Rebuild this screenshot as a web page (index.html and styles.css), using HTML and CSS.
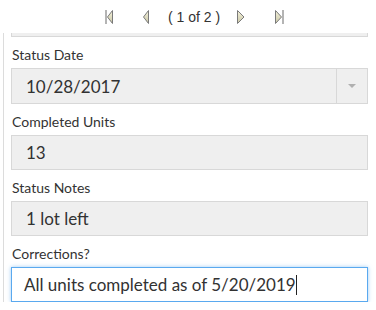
FILE: index.html
```html
<!DOCTYPE html>
<html lang="en">
<head>
    <meta charset="UTF-8">
    <meta name="viewport" content="width=device-width, initial-scale=1.0">
    <title>Edit Status</title>
    <link rel="stylesheet" href="styles.css">
</head>
<body>
    <div class="pager">
        <button class="pager-btn first" title="First">
            <svg width="8" height="16" viewBox="0 0 8 16">
                <defs>
                    <linearGradient id="gl" x1="0" y1="0" x2="0" y2="1">
                        <stop offset="0" stop-color="#f4f2dc"/>
                        <stop offset="1" stop-color="#c9c6a6"/>
                    </linearGradient>
                </defs>
                <rect x="0.5" y="1" width="1" height="14" fill="#6b6b6b"/>
                <path d="M7.5 1.5 L2.5 8 L7.5 14.5 Z" fill="url(#gl)" stroke="#7a7a7a" stroke-width="1" stroke-linejoin="round"/>
            </svg>
        </button>
        <button class="pager-btn prev" title="Previous">
            <svg width="6" height="16" viewBox="0 0 6 16">
                <path d="M5.5 1.5 L0.5 8 L5.5 14.5 Z" fill="url(#gl)" stroke="#7a7a7a" stroke-width="1" stroke-linejoin="round"/>
            </svg>
        </button>
        <span class="pager-count">( 1 of 2 )</span>
        <button class="pager-btn next" title="Next">
            <svg width="8" height="16" viewBox="0 0 8 16">
                <path d="M0.5 1.5 L7 8 L0.5 14.5 Z" fill="url(#gl)" stroke="#7a7a7a" stroke-width="1" stroke-linejoin="round"/>
            </svg>
        </button>
        <button class="pager-btn last" title="Last">
            <svg width="9" height="16" viewBox="0 0 9 16">
                <path d="M0.5 1.5 L6.5 8 L0.5 14.5 Z" fill="url(#gl)" stroke="#7a7a7a" stroke-width="1" stroke-linejoin="round"/>
                <rect x="7.5" y="1" width="1" height="14" fill="#6b6b6b"/>
            </svg>
        </button>
    </div>

    <div class="form">
        <div class="field-box cut"></div>

        <label class="field-label">Status Date</label>
        <div class="field-box select">
            <span class="value">10/28/2017</span>
            <span class="select-arrow"></span>
        </div>

        <label class="field-label">Completed Units</label>
        <div class="field-box"><span class="value">13</span></div>

        <label class="field-label">Status Notes</label>
        <div class="field-box"><span class="value">1 lot left</span></div>

        <label class="field-label">Corrections?</label>
        <div class="field-box active">
            <span class="value">All units completed as of 5/20/2019</span><span class="caret"></span>
        </div>
    </div>
</body>
</html>
```

FILE: styles.css
```css
body {
    margin: 0;
    padding: 0;
    background-color: white;
    font-family: Lato, "Open Sans", Arial, sans-serif;
    color: #323232;
}
.pager {
    height: 33px;
    display: flex;
    align-items: center;
    padding-left: 105px;
    box-sizing: border-box;
}
.pager-btn {
    border: none;
    background: none;
    padding: 0;
    margin: 0;
    height: 16px;
    display: flex;
    align-items: center;
}
.pager-btn.first {
    margin-right: 30px;
}
.pager-btn.prev {
    margin-right: 19px;
}
.pager-btn.next {
    margin-left: 17px;
    margin-right: 30px;
}
.pager-count {
    font-family: "Liberation Sans", Arial, sans-serif;
    font-size: 14px;
    color: #333;
}
.form {
    margin-left: 3px;
    border-left: 1px solid #dcdcdc;
    padding: 0 8px 0 7px;
}
.field-box {
    height: 35px;
    box-sizing: border-box;
    background-color: #efefef;
    border: 1px solid #d8d8d8;
    display: flex;
    align-items: center;
    padding-left: 14px;
    font-size: 17px;
}
.field-box.cut {
    height: 4px;
    border-top: none;
}
.field-label {
    display: block;
    font-size: 14px;
    line-height: 20px;
    padding: 8px 0 3px 1px;
    color: #333;
}
.field-box.select {
    height: 36px;
    padding-right: 0;
}
.field-box.select .value {
    flex-grow: 1;
}
.select-arrow {
    width: 30px;
    height: 100%;
    border-left: 1px solid #d8d8d8;
    display: flex;
    align-items: center;
    justify-content: center;
}
.select-arrow::after {
    content: "";
    border-left: 4px solid transparent;
    border-right: 4px solid transparent;
    border-top: 4px solid #b0b0b0;
}
.field-box.active {
    background-color: white;
    border: 1px solid #5aa9ef;
    box-shadow: 0 0 4px rgba(90, 169, 239, 0.6);
    padding-left: 12px;
}
.caret {
    display: inline-block;
    width: 1px;
    height: 20px;
    background-color: #222;
}
```
